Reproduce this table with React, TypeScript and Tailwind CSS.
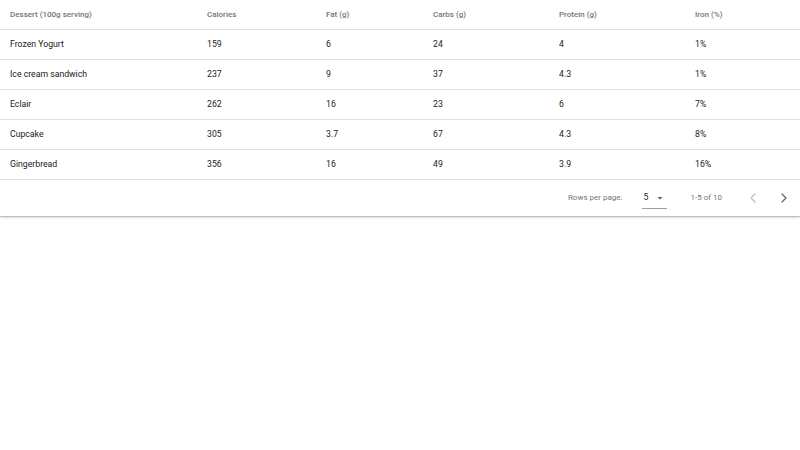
import { ChevronLeft, ChevronRight } from "lucide-react";

const rows = [
  ["Frozen Yogurt", "159", "6", "24", "4", "1%"],
  ["Ice cream sandwich", "237", "9", "37", "4.3", "1%"],
  ["Eclair", "262", "16", "23", "6", "7%"],
  ["Cupcake", "305", "3.7", "67", "4.3", "8%"],
  ["Gingerbread", "356", "16", "49", "3.9", "16%"],
];

const headers = ["Dessert (100g serving)", "Calories", "Fat (g)", "Carbs (g)", "Protein (g)", "Iron (%)"];

const cols = "grid grid-cols-[197px_119px_107px_126px_136px_1fr] pl-[10px] items-center";

export default function App() {
  return (
    <div className="w-[800px] h-[450px] bg-white font-['Roboto',sans-serif]">
      <div className="bg-white shadow-[0_1px_3px_rgba(0,0,0,0.2),0_1px_1px_rgba(0,0,0,0.14)]">
        {/* header */}
        <div className={`${cols} h-[30px] border-b border-[#e0e0e0] text-[8px] font-medium text-[#757575]`}>
          {headers.map((h) => (
            <div key={h}>{h}</div>
          ))}
        </div>

        {/* body */}
        {rows.map((r) => (
          <div key={r[0]} className={`${cols} h-[30px] border-b border-[#e0e0e0] text-[8.7px] text-[#212121]`}>
            {r.map((c, i) => (
              <div key={i}>{c}</div>
            ))}
          </div>
        ))}

        {/* pagination */}
        <div className="flex items-center justify-end h-[36px] text-[8px] text-[#757575] whitespace-nowrap">
          <span>Rows per page:</span>
          <div className="ml-[20px] w-[25px] h-[22px] flex items-center justify-between border-b border-[#9e9e9e] text-[#212121] pl-[1px]">
            <span className="text-[8.7px]">5</span>
            <svg width="12" height="12" viewBox="0 0 24 24" className="mr-[1px]">
              <path d="M7 10l5 5 5-5z" fill="#616161" />
            </svg>
          </div>
          <span className="ml-[23px]">1-5 of 10</span>
          <div className="ml-[23px] flex items-center gap-[15px] mr-[8px]">
            <ChevronLeft className="w-[16px] h-[16px] text-[#bdbdbd]" strokeWidth={1.8} />
            <ChevronRight className="w-[16px] h-[16px] text-[#616161]" strokeWidth={1.8} />
          </div>
        </div>
      </div>
    </div>
  );
}
